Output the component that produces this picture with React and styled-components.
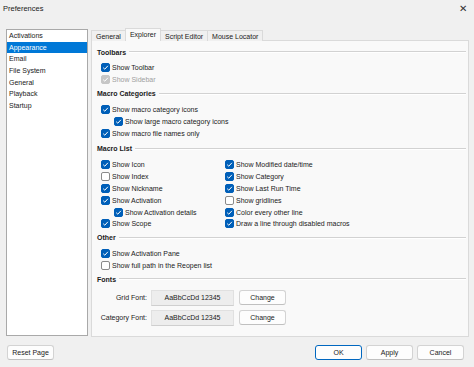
import styled, { createGlobalStyle } from "styled-components";

const Global = createGlobalStyle`
  body {
    margin: 0;
    background: #f0f0f0;
    font-family: "Liberation Sans", Arial, sans-serif;
    font-size: 7px;
    color: #1a1a1a;
  }
`;

const Window = styled.div`
  width: 474px;
  height: 367px;
  display: flex;
  flex-direction: column;
  background: #f0f0f0;
  overflow: hidden;
`;

const TitleBar = styled.div`
  height: 29px;
  box-sizing: border-box;
  display: flex;
  justify-content: space-between;
  align-items: flex-start;
  padding: 4px 7px 0 3px;
  font-size: 7.5px;
`;

const Close = styled.span`
  font-size: 10px;
  line-height: 9px;
  color: #333;
`;

const Body = styled.div`
  display: flex;
  gap: 3px;
  padding: 0 5px 0 6px;
  height: 308px;
`;

const Sidebar = styled.ul`
  list-style: none;
  margin: 0;
  padding: 0;
  width: 82px;
  height: 307px;
  box-sizing: border-box;
  border: 1px solid #a9a9a9;
  background: #fff;
`;

const Item = styled.li`
  height: 11.7px;
  line-height: 11.7px;
  padding-left: 2px;
  background: ${(p) => (p.$active ? "#0078d7" : "transparent")};
  color: ${(p) => (p.$active ? "#fff" : "#1a1a1a")};
`;

const Right = styled.div`
  flex: 1;
  display: flex;
  flex-direction: column;
`;

const Tabs = styled.div`
  display: flex;
  height: 11px;
  position: relative;
  z-index: 1;
`;

const Tab = styled.div`
  padding: 0 4px;
  line-height: 11px;
  border: 1px solid #dadada;
  border-bottom: none;
  margin-left: -1px;
  background: ${(p) => (p.$active ? "#f9f9f9" : "#f0f0f0")};
  height: ${(p) => (p.$active ? "12px" : "10px")};
  margin-top: ${(p) => (p.$active ? "-1px" : "1px")};
  &:first-child {
    margin-left: 0;
  }
`;

const Panel = styled.div`
  height: 297px;
  box-sizing: border-box;
  border: 1px solid #dadada;
  background: #f9f9f9;
  padding: 5px 2px 0 5px;
`;

const Group = styled.div`
  margin-bottom: ${(p) => p.$after || 2}px;
`;

const GroupTitle = styled.div`
  display: flex;
  align-items: center;
  gap: 3px;
  height: 12px;
  margin-bottom: 4px;
  font-weight: bold;
  &::after {
    content: "";
    flex: 1;
    height: 1px;
    background: #d2d2d2;
    border-bottom: 1px solid #fff;
  }
`;

const Columns = styled.div`
  display: flex;
`;

const Column = styled.div`
  width: ${(p) => p.$width || "auto"};
`;

const Row = styled.label`
  display: flex;
  align-items: center;
  gap: 2px;
  height: 11.8px;
  padding-left: ${(p) => 4 + (p.$indent ? 13 : 0)}px;
  color: ${(p) => (p.$disabled ? "#a0a0a0" : "#1a1a1a")};
`;

const Box = styled.span`
  width: 9px;
  height: 9px;
  box-sizing: border-box;
  border-radius: 2px;
  display: flex;
  align-items: center;
  justify-content: center;
  background: ${(p) =>
    p.$disabled ? "#c6c6c6" : p.$checked ? "#005fb8" : "#fff"};
  border: 1px solid
    ${(p) => (p.$disabled ? "#c6c6c6" : p.$checked ? "#005fb8" : "#8a8a8a")};
`;

const Check = ({ checked = true, disabled, indent, children }) => (
  <Row $indent={indent} $disabled={disabled}>
    <Box $checked={checked} $disabled={disabled}>
      {checked && (
        <svg width="7" height="7" viewBox="0 0 7 7">
          <path d="M1.2 3.7 L2.8 5.2 L5.9 1.8" fill="none" stroke="#fff" strokeWidth="1" />
        </svg>
      )}
    </Box>
    {children}
  </Row>
);

const FontRow = styled.div`
  display: flex;
  align-items: center;
  height: 17px;
  margin-bottom: 3px;
`;

const FontLabel = styled.span`
  width: 50px;
  text-align: right;
  margin-right: 4px;
`;

const FontSample = styled.div`
  width: 83px;
  height: 16px;
  box-sizing: border-box;
  border: 1px solid #e0e0e0;
  border-bottom-color: #cfcfcf;
  background: #ededed;
  display: flex;
  align-items: center;
  justify-content: center;
  margin-right: 5px;
`;

const Button = styled.button`
  width: 47px;
  height: 15px;
  box-sizing: border-box;
  padding: 0;
  font-family: inherit;
  font-size: 7px;
  color: #1a1a1a;
  background: #fdfdfd;
  border: 1px solid ${(p) => (p.$primary ? "#0067c0" : "#d3d3d3")};
  border-bottom-color: ${(p) => (p.$primary ? "#0067c0" : "#c0c0c0")};
  border-radius: 3px;
`;

const Footer = styled.div`
  display: flex;
  justify-content: space-between;
  align-items: flex-start;
  padding: 8px 10px 0 7px;
`;

const Actions = styled.div`
  display: flex;
  gap: 4px;
`;

const pages = ["Activations", "Appearance", "Email", "File System", "General", "Playback", "Startup"];
const tabs = ["General", "Explorer", "Script Editor", "Mouse Locator"];

export default function App() {
  return (
    <Window>
      <Global />
      <TitleBar>
        <span>Preferences</span>
        <Close>✕</Close>
      </TitleBar>
      <Body>
        <Sidebar>
          {pages.map((p) => (
            <Item key={p} $active={p === "Appearance"}>
              {p}
            </Item>
          ))}
        </Sidebar>
        <Right>
          <Tabs>
            {tabs.map((t) => (
              <Tab key={t} $active={t === "Explorer"}>
                {t}
              </Tab>
            ))}
          </Tabs>
          <Panel>
            <Group $after={2}>
              <GroupTitle>Toolbars</GroupTitle>
              <Check>Show Toolbar</Check>
              <Check disabled>Show Sidebar</Check>
            </Group>
            <Group $after={4}>
              <GroupTitle>Macro Categories</GroupTitle>
              <Check>Show macro category icons</Check>
              <Check indent>Show large macro category icons</Check>
              <Check>Show macro file names only</Check>
            </Group>
            <Group $after={2}>
              <GroupTitle>Macro List</GroupTitle>
              <Columns>
                <Column $width="124px">
                  <Check>Show Icon</Check>
                  <Check checked={false}>Show Index</Check>
                  <Check>Show Nickname</Check>
                  <Check>Show Activation</Check>
                  <Check indent>Show Activation details</Check>
                  <Check>Show Scope</Check>
                </Column>
                <Column>
                  <Check>Show Modified date/time</Check>
                  <Check>Show Category</Check>
                  <Check>Show Last Run Time</Check>
                  <Check checked={false}>Show gridlines</Check>
                  <Check>Color every other line</Check>
                  <Check>Draw a line through disabled macros</Check>
                </Column>
              </Columns>
            </Group>
            <Group $after={2}>
              <GroupTitle>Other</GroupTitle>
              <Check>Show Activation Pane</Check>
              <Check checked={false}>Show full path in the Reopen list</Check>
            </Group>
            <Group>
              <GroupTitle>Fonts</GroupTitle>
              <FontRow>
                <FontLabel>Grid Font:</FontLabel>
                <FontSample>AaBbCcDd 12345</FontSample>
                <Button>Change</Button>
              </FontRow>
              <FontRow>
                <FontLabel>Category Font:</FontLabel>
                <FontSample>AaBbCcDd 12345</FontSample>
                <Button>Change</Button>
              </FontRow>
            </Group>
          </Panel>
        </Right>
      </Body>
      <Footer>
        <Button>Reset Page</Button>
        <Actions>
          <Button $primary>OK</Button>
          <Button>Apply</Button>
          <Button>Cancel</Button>
        </Actions>
      </Footer>
    </Window>
  );
}
